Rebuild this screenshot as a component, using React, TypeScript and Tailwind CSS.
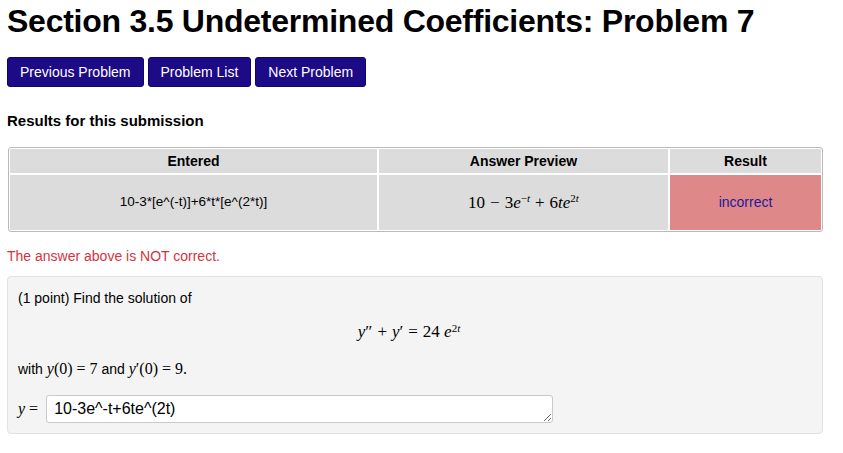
export default function App() {
  return (
    <div className="min-h-screen bg-white px-[7px] pt-[2px] font-['Liberation_Sans',Arial,sans-serif] text-black">
      <h1 className="text-[32px] font-bold leading-[38px] tracking-[-0.25px]">
        Section 3.5 Undetermined Coefficients: Problem 7
      </h1>

      {/* nav buttons */}
      <div className="mt-[17px] flex gap-1">
        {["Previous Problem", "Problem List", "Next Problem"].map((b) => (
          <button
            key={b}
            className="h-[30px] rounded-[3px] border border-[#10056e] bg-[#1c0a86] px-3 text-[14px] text-white"
          >
            {b}
          </button>
        ))}
      </div>

      <h2 className="mt-[25px] text-[15px] font-bold leading-[18px]">Results for this submission</h2>

      {/* results table */}
      <div className="mt-[17px] ml-px w-[815px] rounded-[3px] border border-[#b9b9b9] bg-white p-px">
        <div className="grid grid-cols-[367px_289px_1fr] gap-[2px] text-[14px]">
          <div className="flex h-[24px] items-center justify-center bg-[#dcdcdc] font-bold">Entered</div>
          <div className="flex h-[24px] items-center justify-center bg-[#dcdcdc] font-bold">Answer Preview</div>
          <div className="flex h-[24px] items-center justify-center bg-[#dcdcdc] font-bold">Result</div>
          <div className="flex h-[55px] items-center justify-center bg-[#dcdcdc] text-[13.5px]">
            10-3*[e^(-t)]+6*t*[e^(2*t)]
          </div>
          <div className="flex h-[55px] items-center justify-center bg-[#dcdcdc] font-['Liberation_Serif',serif] text-[17px]">
            <span>
              10<span className="mx-[5px]">−</span>3<i>e</i>
              <sup className="text-[11px]">−<i>t</i></sup>
              <span className="mx-[5px]">+</span>6<i>te</i>
              <sup className="text-[11px]">
                2<i>t</i>
              </sup>
            </span>
          </div>
          <div className="flex h-[55px] items-center justify-center bg-[#df888a] text-[14px] text-[#1b1b9b]">
            incorrect
          </div>
        </div>
      </div>

      <p className="mt-[14px] text-[14px] text-[#d6333f]">The answer above is NOT correct.</p>

      {/* problem box */}
      <div className="mt-[9px] w-[816px] rounded-[4px] border border-[#e2e2e2] bg-[#f4f4f4] px-[10px] pt-[11px] pb-[10px] text-[14px]">
        <p>(1 point) Find the solution of</p>
        <div className="mt-[10px] flex justify-center font-['Liberation_Serif',serif] text-[17px]">
          <span className="mr-[12px]">
            <i>y</i>″<span className="mx-[5px]">+</span>
            <i>y</i>′<span className="mx-[5px]">=</span>24 <i>e</i>
            <sup className="text-[11px]">
              2<i>t</i>
            </sup>
          </span>
        </div>
        <p className="mt-[12px]">
          with{" "}
          <span className="font-['Liberation_Serif',serif] text-[16px]">
            <i>y</i>(0)<span className="mx-[4px]">=</span>7
          </span>{" "}
          and{" "}
          <span className="font-['Liberation_Serif',serif] text-[16px]">
            <i>y</i>′(0)<span className="mx-[4px]">=</span>9.
          </span>
        </p>
        <div className="mt-[14px] flex items-center gap-[8px]">
          <span className="font-['Liberation_Serif',serif] text-[16px]">
            <i>y</i> =
          </span>
          <textarea
            readOnly
            rows={1}
            value="10-3e^-t+6te^(2t)"
            className="h-[28px] w-[507px] resize rounded-[3px] border border-[#c9c9c9] bg-white px-[7px] py-[3px] text-[16px] leading-[20px] outline-none"
          />
        </div>
      </div>
    </div>
  );
}
